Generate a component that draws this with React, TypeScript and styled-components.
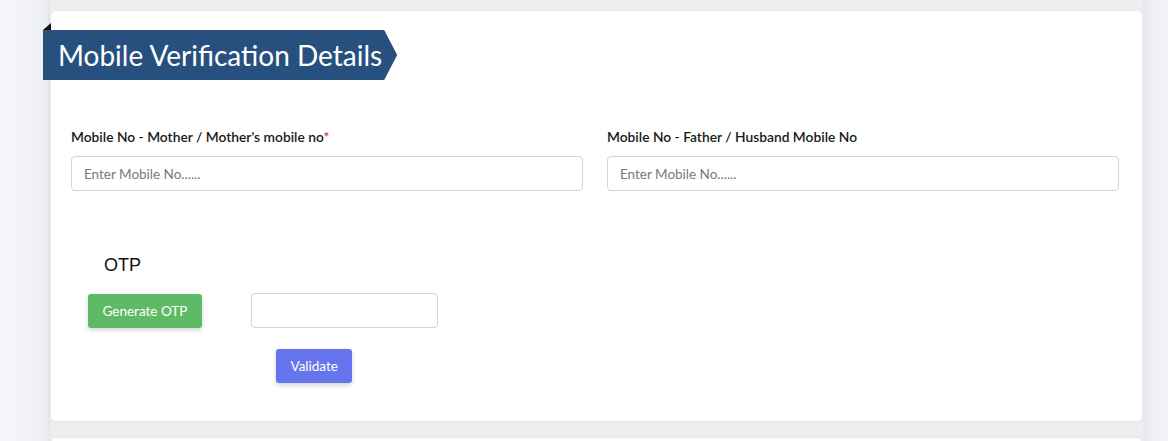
import React from "react";
import styled, { createGlobalStyle } from "styled-components";

const Global = createGlobalStyle`
  html, body { margin: 0; padding: 0; }
  body {
    width: 1168px;
    height: 441px;
    overflow: hidden;
    background: linear-gradient(90deg, #f7f8fc 0px, #eef0f6 50px);
    font-family: Lato, "Open Sans", sans-serif;
  }
`;

const Page = styled.div`
  display: flex;
  height: 441px;
`;

const SideGap = styled.div`
  width: 50px;
  flex: none;
  background: linear-gradient(90deg, #f6f7fb 0%, #eef0f5 85%, #e4e6ec 100%);
`;

const RightGap = styled.div`
  flex: 1;
  background: linear-gradient(90deg, #e6e8ee 0%, #f0f1f6 40%, #f2f3f7 100%);
`;

const Main = styled.main`
  width: 1093px;
  flex: none;
  background: #eeeeee;
  padding: 11px 1px 0;
  box-sizing: border-box;
  display: flex;
  flex-direction: column;
  gap: 16px;
`;

const Card = styled.section`
  background: #ffffff;
  border-radius: 5px;
  box-shadow: 0 2px 6px rgba(0, 0, 0, 0.04);
  height: 410px;
  box-sizing: border-box;
  padding: 19px 0 0 0;
  display: flex;
  flex-direction: column;
  flex: none;
`;

const NextCard = styled.div`
  background: #ffffff;
  border-radius: 5px 5px 0 0;
  border: 1px solid #e6e6e6;
  border-bottom: none;
  height: 10px;
  flex: none;
`;

const Ribbon = styled.h2`
  margin: 0;
  height: 50px;
  box-sizing: border-box;
  padding: 0 15px 0 15px;
  background: #27507f;
  color: #ffffff;
  font-family: Lato, "Open Sans", sans-serif;
  font-weight: 400;
  font-size: 28px;
  line-height: 50px;
  clip-path: polygon(0 0, calc(100% - 13px) 0, 100% 50%, calc(100% - 13px) 100%, 0 100%);
`;

const RibbonWrap = styled.div`
  position: relative;
  align-self: flex-start;
  margin-left: -8px;
  &::before {
    content: "";
    position: absolute;
    left: 0;
    top: -7px;
    width: 0;
    height: 0;
    border-style: solid;
    border-width: 0 0 7px 8px;
    border-color: transparent transparent #111111 transparent;
  }
`;

const Fields = styled.div`
  display: grid;
  grid-template-columns: 512px 512px;
  column-gap: 24px;
  padding: 48px 0 0 20px;
`;

const Field = styled.div`
  display: flex;
  flex-direction: column;
`;

const Label = styled.label`
  font-family: Lato, "Open Sans", sans-serif;
  font-weight: 600;
  font-size: 13.8px;
  color: #1a1a1a;
  line-height: 18px;
  margin-bottom: 10px;
`;

const Req = styled.span`
  color: #e3262f;
`;

const TextInput = styled.input<{ $w?: number }>`
  box-sizing: border-box;
  width: ${(p) => (p.$w ? `${p.$w}px` : "100%")};
  height: 35px;
  border: 1px solid #cfd3da;
  border-radius: 4px;
  padding: 0 12px;
  font-family: Lato, "Open Sans", sans-serif;
  font-size: 13.5px;
  color: #333;
  outline: none;
  background: #fff;
  &::placeholder { color: #747b82; }
`;

const Otp = styled.div`
  display: flex;
  flex-direction: column;
  padding: 63px 0 0 37px;
`;

const OtpTitle = styled.div`
  font-family: "Liberation Sans", Arial, sans-serif;
  font-size: 18px;
  color: #111;
  line-height: 22px;
  margin: 0 0 17px 16px;
`;

const OtpRow = styled.div`
  display: flex;
  align-items: center;
  gap: 49px;
`;

const Button = styled.button<{ $bg: string }>`
  height: 34px;
  border: none;
  border-radius: 3px;
  background: ${(p) => p.$bg};
  color: #fff;
  font-family: Lato, "Open Sans", sans-serif;
  font-size: 13.5px;
  padding: 0 14.5px;
  box-shadow: 0 2px 5px rgba(0, 0, 0, 0.18);
  cursor: pointer;
`;

const ValidateRow = styled.div`
  display: flex;
  padding: 21px 0 0 188px;
`;

export default function App() {
  return (
    <>
      <Global />
      <Page>
        <SideGap />
        <Main>
          <Card>
            <RibbonWrap>
              <Ribbon>Mobile Verification Details</Ribbon>
            </RibbonWrap>
            <Fields>
              <Field>
                <Label>
                  Mobile No - Mother / Mother's mobile no<Req>*</Req>
                </Label>
                <TextInput placeholder="Enter Mobile No......" />
              </Field>
              <Field>
                <Label>Mobile No - Father / Husband Mobile No</Label>
                <TextInput placeholder="Enter Mobile No......" />
              </Field>
            </Fields>
            <Otp>
              <OtpTitle>OTP</OtpTitle>
              <OtpRow>
                <Button $bg="#5fba67">Generate OTP</Button>
                <TextInput $w={187} />
              </OtpRow>
              <ValidateRow>
                <Button $bg="#6675ee">Validate</Button>
              </ValidateRow>
            </Otp>
          </Card>
          <NextCard />
        </Main>
        <RightGap />
      </Page>
    </>
  );
}
